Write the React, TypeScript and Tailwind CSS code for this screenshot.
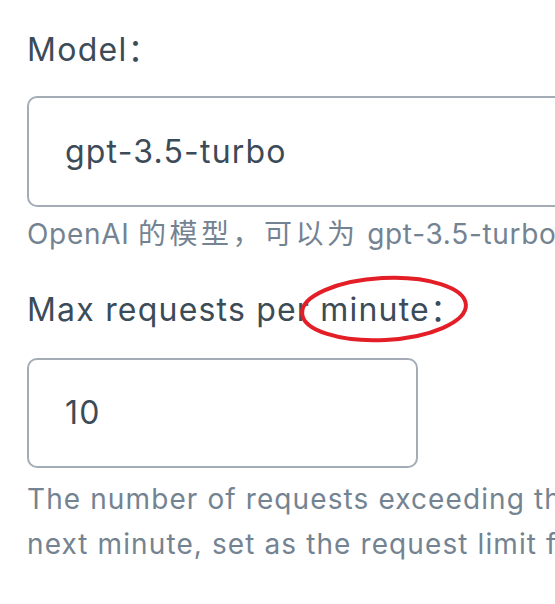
import React from "react";

const font = { fontFamily: '"Inter", "Noto Sans CJK SC", sans-serif' };

export default function App() {
  return (
    <div className="relative w-[555px] h-[604px] overflow-hidden bg-white" style={font}>
      <div className="w-[900px] pl-[27px] pt-[26px] flex flex-col">
        <label className="text-[32px] leading-[48px] tracking-[1.3px] text-[#3c4b58]">
          Model<span className="tracking-normal">：</span>
        </label>
        <div className="mt-[22px] w-[700px] h-[111px] border-2 border-[#a4adb7] rounded-[10px] flex items-center pl-[36px] text-[32px] leading-[48px] tracking-[1.2px] text-[#3c4b58]">
          gpt-3.5-turbo
        </div>
        <p className="mt-[6px] text-[28px] leading-[42px] tracking-[0.7px] text-[#748391] whitespace-nowrap">
          OpenAI <span className="tracking-[3.5px]">的模型，可以为</span> gpt-3.5-turbo 或者 gpt-4
        </p>
        <label className="mt-[31px] text-[32px] leading-[48px] tracking-[1.2px] text-[#3c4b58] whitespace-nowrap">
          Max requests per minute<span className="tracking-normal">：</span>
        </label>
        <div className="mt-[24px] w-[391px] h-[110px] border-2 border-[#a4adb7] rounded-[10px] flex items-center pl-[36px] text-[32px] leading-[48px] tracking-[1.2px] text-[#3c4b58]">
          10
        </div>
        <p className="mt-[9px] text-[28px] leading-[45px] tracking-[1.1px] text-[#748391] whitespace-nowrap">
          The number of requests exceeding this limit will wait until the
          <br />
          next minute, set as the request limit for your OpenAI account.
        </p>
      </div>
      <svg className="absolute left-0 top-0 pointer-events-none" width="555" height="604">
        <ellipse cx="384" cy="309" rx="82" ry="31" fill="none" stroke="#e41e26" strokeWidth="4" transform="rotate(-3 384 309)" />
      </svg>
    </div>
  );
}
